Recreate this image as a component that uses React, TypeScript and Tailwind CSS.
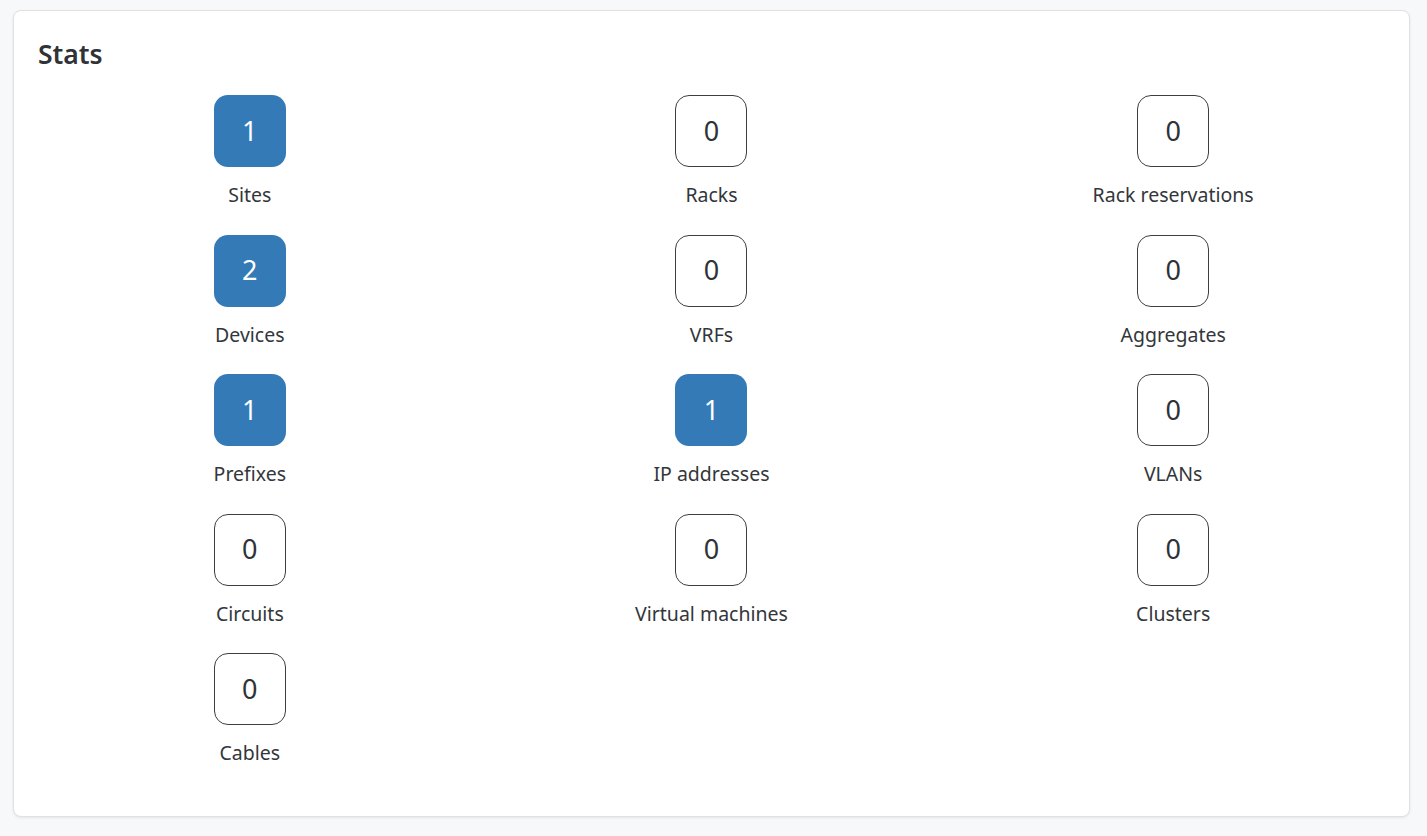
const stats = [
  { label: "Sites", count: 1 },
  { label: "Racks", count: 0 },
  { label: "Rack reservations", count: 0 },
  { label: "Devices", count: 2 },
  { label: "VRFs", count: 0 },
  { label: "Aggregates", count: 0 },
  { label: "Prefixes", count: 1 },
  { label: "IP addresses", count: 1 },
  { label: "VLANs", count: 0 },
  { label: "Circuits", count: 0 },
  { label: "Virtual machines", count: 0 },
  { label: "Clusters", count: 0 },
  { label: "Cables", count: 0 },
];

function StatItem({ label, count }: { label: string; count: number }) {
  const active = count > 0;
  return (
    <div className="flex flex-col items-center">
      <div
        className={
          active
            ? "w-[72px] h-[72px] rounded-[14px] bg-[#337ab7] text-white flex items-center justify-center text-[27px]"
            : "w-[72px] h-[72px] rounded-[14px] border border-[#3b3e42] bg-white text-[#2f3237] flex items-center justify-center text-[27px]"
        }
      >
        {count}
      </div>
      <div className="mt-[13px] leading-[30px] text-[19.5px] text-[#33363a]">{label}</div>
    </div>
  );
}

export default function App() {
  return (
    <div
      className="min-h-screen bg-[#f6f8fa] pt-[10px] px-[13px]"
      style={{ fontFamily: '"Noto Sans", "Open Sans", sans-serif' }}
    >
      <div className="w-[1397px] h-[807px] bg-white border border-[#dfe1e4] rounded-[8px] shadow-[0_1px_3px_rgba(0,0,0,0.08)]">
        <h2 className="pt-[26px] pl-[24px] text-[26.5px] leading-[34px] font-semibold text-[#2f3237]">Stats</h2>
        <div className="grid grid-cols-3 gap-y-[24.5px] px-[5px] mt-[24px]">
          {stats.map((s) => (
            <StatItem key={s.label} label={s.label} count={s.count} />
          ))}
        </div>
      </div>
    </div>
  );
}
